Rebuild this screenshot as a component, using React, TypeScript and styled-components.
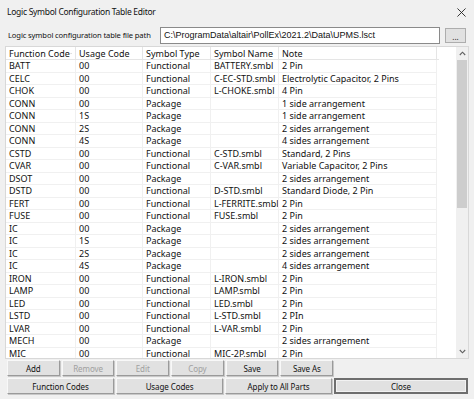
import React from "react";
import styled, { createGlobalStyle } from "styled-components";

const Global = createGlobalStyle`
  html, body { margin: 0; padding: 0; }
  body {
    width: 474px; height: 399px; overflow: hidden;
    background: #f0f0f0;
    font-family: "Noto Sans", "Open Sans", sans-serif;
  }
`;

const Window = styled.div`
  width: 474px;
  height: 399px;
  display: flex;
  flex-direction: column;
  background: #f0f0f0;
`;

const TitleBar = styled.div`
  height: 22px;
  display: flex;
  align-items: center;
  justify-content: space-between;
  padding: 0 7px 0 7px;
  font-size: 8.5px;
  letter-spacing: -0.28px;
  color: #111;
`;

const CloseX = styled.svg`
  width: 9px;
  height: 9px;
  margin-top: 3px;
  margin-right: 1px;
`;

const PathRow = styled.div`
  display: flex;
  align-items: center;
  height: 22px;
  padding: 0 5px 0 8px;
  margin-top: 2px;
`;

const PathLabel = styled.div`
  width: 152px;
  font-size: 7.6px;
  letter-spacing: -0.12px;
  white-space: nowrap;
  color: #111;
`;

const PathInput = styled.div`
  width: 280px;
  height: 17px;
  border: 1px solid #8a8a8a;
  background: #fff;
  display: flex;
  align-items: center;
  padding-left: 3px;
  box-sizing: border-box;
  font-family: "Liberation Sans", Arial, sans-serif;
  font-size: 9px;
  color: #111;
`;

const DotsButton = styled.div`
  width: 21px;
  height: 15px;
  margin-left: 5px;
  box-sizing: border-box;
  border: 1px solid #adadad;
  background: #e1e1e1;
  display: flex;
  align-items: flex-end;
  justify-content: center;
  font-size: 8px;
  line-height: 10px;
  color: #222;
`;

const TableFrame = styled.div`
  margin: 0 5px;
  height: 313px;
  box-sizing: border-box;
  border: 1px solid #d8d8d8;
  background: #fff;
  display: flex;
  overflow: hidden;
`;

const TableBody = styled.div`
  flex: 1;
  overflow: hidden;
  font-size: 9px;
  color: #111;
`;

const cols = "70px 67px 68px 68px 158px";

const HeaderRow = styled.div`
  display: grid;
  grid-template-columns: ${cols};
  height: 13px;
  border-bottom: 1px solid #e5e5e5;
  box-sizing: border-box;
`;

const HeaderCell = styled.div`
  border-right: 1px solid #e5e5e5;
  padding-left: 3px;
  display: flex;
  align-items: center;
  justify-content: space-between;
  padding-right: 3px;
  white-space: nowrap;
  overflow: hidden;
`;

const Row = styled.div`
  display: grid;
  grid-template-columns: ${cols};
  height: 12.5px;
`;

const Cell = styled.div`
  border-right: 1px solid #f0f0f0;
  border-bottom: 1px solid #f0f0f0;
  box-sizing: border-box;
  padding-left: 3px;
  display: flex;
  align-items: center;
  white-space: nowrap;
  overflow: hidden;
`;

const ScrollBar = styled.div`
  width: 12px;
  margin-left: 17px;
  background: #f0f0f0;
  display: flex;
  flex-direction: column;
  align-items: center;
`;

const ScrollArrow = styled.svg`
  width: 7px;
  height: 5px;
  margin: 4px 0;
`;

const Thumb = styled.div`
  width: 10px;
  height: 148px;
  background: #cdcdcd;
`;

const Spacer = styled.div`
  flex: 1;
`;

const ButtonsArea = styled.div`
  display: flex;
  flex-direction: column;
  gap: 2px;
  padding: 1px 5px 0 7px;
`;

const ButtonRow = styled.div<{ $cols: string }>`
  display: grid;
  grid-template-columns: ${(p) => p.$cols};
  gap: 2px;
`;

const Button = styled.div<{ $disabled?: boolean; $default?: boolean }>`
  height: 16px;
  box-sizing: border-box;
  background: #e1e1e1;
  border: 1px solid;
  border-color: #f8f8f8 #9a9a9a #9a9a9a #f8f8f8;
  box-shadow: 1px 1px 0 #c8c8c8;
  display: flex;
  align-items: center;
  justify-content: center;
  font-size: 8px;
  letter-spacing: -0.1px;
  color: ${(p) => (p.$disabled ? "#a0a0a0" : "#111")};
  ${(p) =>
    p.$default &&
    `border: 2px solid #6e6e6e; box-shadow: inset 0 0 0 1px #f2f2f2;`}
`;

const rows: [string, string, string, string, string][] = [
  ["BATT", "00", "Functional", "BATTERY.smbl", "2 Pin"],
  ["CELC", "00", "Functional", "C-EC-STD.smbl", "Electrolytic Capacitor, 2 Pins"],
  ["CHOK", "00", "Functional", "L-CHOKE.smbl", "4 Pin"],
  ["CONN", "00", "Package", "", "1 side arrangement"],
  ["CONN", "1S", "Package", "", "1 side arrangement"],
  ["CONN", "2S", "Package", "", "2 sides arrangement"],
  ["CONN", "4S", "Package", "", "4 sides arrangement"],
  ["CSTD", "00", "Functional", "C-STD.smbl", "Standard, 2 Pins"],
  ["CVAR", "00", "Functional", "C-VAR.smbl", "Variable Capacitor, 2 Pins"],
  ["DSOT", "00", "Package", "", "2 sides arrangement"],
  ["DSTD", "00", "Functional", "D-STD.smbl", "Standard Diode, 2 Pin"],
  ["FERT", "00", "Functional", "L-FERRITE.smbl", "2 Pin"],
  ["FUSE", "00", "Functional", "FUSE.smbl", "2 Pin"],
  ["IC", "00", "Package", "", "2 sides arrangement"],
  ["IC", "1S", "Package", "", "2 sides arrangement"],
  ["IC", "2S", "Package", "", "2 sides arrangement"],
  ["IC", "4S", "Package", "", "4 sides arrangement"],
  ["IRON", "00", "Functional", "L-IRON.smbl", "2 Pin"],
  ["LAMP", "00", "Functional", "LAMP.smbl", "2 Pin"],
  ["LED", "00", "Functional", "LED.smbl", "2 Pin"],
  ["LSTD", "00", "Functional", "L-STD.smbl", "2 PIn"],
  ["LVAR", "00", "Functional", "L-VAR.smbl", "2 Pin"],
  ["MECH", "00", "Package", "", "2 sides arrangement"],
  ["MIC", "00", "Functional", "MIC-2P.smbl", "2 Pin"],
];

export default function App() {
  return (
    <>
      <Global />
      <Window>
        <TitleBar>
          <span>Logic Symbol Configuration Table Editor</span>
          <CloseX viewBox="0 0 10 10">
            <path d="M0.5 0.5 L9.5 9.5 M9.5 0.5 L0.5 9.5" stroke="#222" strokeWidth="1" />
          </CloseX>
        </TitleBar>
        <PathRow>
          <PathLabel>Logic symbol configuration table file path</PathLabel>
          <PathInput>C:\ProgramData\altair\PollEx\2021.2\Data\UPMS.lsct</PathInput>
          <DotsButton>...</DotsButton>
        </PathRow>
        <TableFrame>
          <TableBody>
            <HeaderRow>
              <HeaderCell>
                Function Code
                <svg width="7" height="5" viewBox="0 0 7 5">
                  <path d="M0.5 4.5 L3.5 0.8 L6.5 4.5" fill="none" stroke="#888" strokeWidth="0.8" />
                </svg>
              </HeaderCell>
              <HeaderCell>Usage Code</HeaderCell>
              <HeaderCell>Symbol Type</HeaderCell>
              <HeaderCell>Symbol Name</HeaderCell>
              <HeaderCell>Note</HeaderCell>
            </HeaderRow>
            {rows.map((r, i) => (
              <Row key={i}>
                {r.map((c, j) => (
                  <Cell key={j}>{c}</Cell>
                ))}
              </Row>
            ))}
          </TableBody>
          <ScrollBar>
            <ScrollArrow viewBox="0 0 7 5">
              <path d="M0.8 4 L3.5 1.2 L6.2 4" fill="none" stroke="#606060" strokeWidth="1.1" />
            </ScrollArrow>
            <Thumb />
            <Spacer />
            <ScrollArrow viewBox="0 0 7 5">
              <path d="M0.8 1 L3.5 3.8 L6.2 1" fill="none" stroke="#606060" strokeWidth="1.1" />
            </ScrollArrow>
          </ScrollBar>
        </TableFrame>
        <ButtonsArea>
          <ButtonRow $cols="repeat(6, 52.7px)">
            <Button>Add</Button>
            <Button $disabled>Remove</Button>
            <Button $disabled>Edit</Button>
            <Button $disabled>Copy</Button>
            <Button>Save</Button>
            <Button>Save As</Button>
          </ButtonRow>
          <ButtonRow $cols="107px 107px 107px 134px">
            <Button>Function Codes</Button>
            <Button>Usage Codes</Button>
            <Button>Apply to All Parts</Button>
            <Button $default>Close</Button>
          </ButtonRow>
        </ButtonsArea>
      </Window>
    </>
  );
}
